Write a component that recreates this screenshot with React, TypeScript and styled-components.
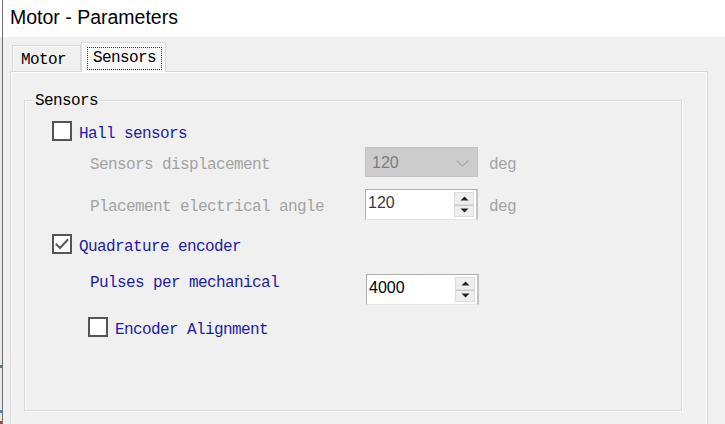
import React from "react";
import styled, { createGlobalStyle } from "styled-components";

const Global = createGlobalStyle`
  html, body { margin: 0; padding: 0; background: #f0f0f0; }
  #root { width: 725px; height: 424px; overflow: hidden; }
`;

const MONO = `"Liberation Mono", "Courier New", monospace`;
const SANS = `"Liberation Sans", Arial, sans-serif`;

const Window = styled.div`
  display: flex;
  width: 725px;
  height: 424px;
  overflow: hidden;
  background: #f0f0f0;
`;

const LeftEdge = styled.div`
  width: 2px;
  flex: none;
  border-right: 1px solid #6e6e6e;
  background:
    linear-gradient(#4a8a4a, #4a8a4a) 0 365px / 2px 3px no-repeat,
    linear-gradient(#3d8fe0, #3d8fe0) 0 410px / 2px 3px no-repeat,
    linear-gradient(#d03030, #d03030) 0 421px / 2px 3px no-repeat,
    linear-gradient(#ffffff, #ffffff) 0 0 / 2px 37px no-repeat,
    #e8e8e8;
`;

const Main = styled.div`
  flex: 1;
  display: flex;
  flex-direction: column;
  min-width: 0;
`;

const TitleBar = styled.div`
  height: 37px;
  flex: none;
  background: #ffffff;
  display: flex;
  align-items: center;
  padding: 0 0 2px 7px;
  box-sizing: border-box;
  font-family: ${SANS};
  font-size: 19.5px;
  color: #000;
`;

const Body = styled.div`
  flex: 1;
  display: flex;
  flex-direction: column;
  padding: 5px 0 0 7px;
  background: #f0f0f0;
`;

const TabStrip = styled.div`
  height: 30px;
  display: flex;
  align-items: flex-end;
  padding-left: 2px;
  position: relative;
  z-index: 1;
  margin-bottom: -1px;
`;

const Tab = styled.div<{ $active?: boolean }>`
  box-sizing: border-box;
  height: ${(p) => (p.$active ? 30 : 27)}px;
  padding: ${(p) => (p.$active ? "4px 3px 2px 5px" : "2px 8px 0")};
  display: flex;
  align-items: ${(p) => (p.$active ? "stretch" : "center")};
  border: 1px solid #d9d9d9;
  border-bottom: ${(p) => (p.$active ? "none" : "1px solid #d9d9d9")};
  background: ${(p) => (p.$active ? "#f9f9f9" : "#f0f0f0")};
  box-shadow: ${(p) => (p.$active ? "inset 1px 1px 0 #ffffff" : "inset 1px 1px 0 #fafafa")};
  font-family: ${MONO};
  font-size: 16px;
  letter-spacing: -0.6px;
  color: #000;
  width: ${(p) => (p.$active ? 85 : 69)}px;
`;

const FocusRect = styled.div`
  flex: 1;
  border: 1px dotted #333;
  display: flex;
  align-items: center;
  padding-left: 5px;
  padding-bottom: 1px;
`;

const TabPage = styled.div`
  width: 698px;
  flex: 1;
  box-sizing: border-box;
  border: 1px solid #d6d6d6;
  border-bottom: none;
  box-shadow: inset 1px 1px 0 #ffffff, inset -1px 0 0 #ffffff;
  background: #f0f0f0;
  padding: 28px 0 0 13px;
  display: flex;
  flex-direction: column;
`;

const GroupBox = styled.div`
  position: relative;
  width: 658px;
  height: 311px;
  box-sizing: border-box;
  border: 1px solid #dadada;
  box-shadow: inset 1px 1px 0 #fbfbfb, 1px 1px 0 #fbfbfb;
  display: flex;
  flex-direction: column;
  padding-left: 27px;
`;

const GroupTitle = styled.div`
  position: absolute;
  top: -8px;
  left: 8px;
  padding: 0 2px;
  background: #f0f0f0;
  font-family: ${MONO};
  font-size: 16px;
  letter-spacing: -0.6px;
  line-height: 16px;
  color: #000;
`;

const Row = styled.div<{ $top: number; $h: number; $indent?: number; $align?: string }>`
  display: flex;
  align-items: ${(p) => p.$align ?? "center"};
  margin-top: ${(p) => p.$top}px;
  height: ${(p) => p.$h}px;
  padding-left: ${(p) => p.$indent ?? 0}px;
`;

const Box = styled.div`
  width: 20px;
  height: 20px;
  box-sizing: border-box;
  border: 2px solid #555;
  background: #fff;
  display: flex;
  align-items: center;
  justify-content: center;
  flex: none;
`;

const Text = styled.span<{ $tone: "blue" | "gray" | "black"; $gap?: number; $w?: number; $pt?: number }>`
  font-family: ${MONO};
  font-size: 16px;
  letter-spacing: -0.6px;
  line-height: 16px;
  white-space: nowrap;
  padding-top: ${(p) => p.$pt ?? 5}px;
  margin-left: ${(p) => p.$gap ?? 0}px;
  ${(p) => (p.$w ? `width: ${p.$w}px; flex: none;` : "")}
  color: ${(p) =>
    p.$tone === "blue" ? "#1c1ca6" : p.$tone === "gray" ? "#a3a3a3" : "#000"};
`;

const Combo = styled.div`
  width: 113px;
  height: 30px;
  box-sizing: border-box;
  background: #cccccc;
  border: 1px solid #c2c2c2;
  display: flex;
  align-items: center;
  justify-content: space-between;
  padding: 2px 8px 0 6px;
  font-family: ${SANS};
  font-size: 16px;
  color: #7c7c7c;
  flex: none;
`;

const Spin = styled.div`
  width: 113px;
  height: 31px;
  box-sizing: border-box;
  background: #fff;
  border: 1px solid #b0b0b0;
  border-right: 2px solid #c4c4c4;
  border-bottom-color: #e6e6e6;
  display: flex;
  align-items: stretch;
  flex: none;
`;

const SpinValue = styled.div<{ $dim?: boolean }>`
  flex: 1;
  display: flex;
  align-items: center;
  padding: 0 0 3px 2px;
  font-family: ${SANS};
  font-size: 16px;
  color: ${(p) => (p.$dim ? "#3a3a3a" : "#000")};
`;

const SpinButtons = styled.div`
  width: 20px;
  display: flex;
  flex-direction: column;
  padding: 2px 2px 2px 0;
`;

const SpinBtn = styled.div`
  flex: 1;
  background: #eeeeee;
  border: 1px solid #dcdcdc;
  display: flex;
  align-items: center;
  justify-content: center;
  & + & { border-top-color: #c8c8c8; }
`;

const Unit = styled(Text)``;

const Arrow = ({ up }: { up?: boolean }) => (
  <svg width="9" height="5" viewBox="0 0 9 5">
    <path d={up ? "M0.5 4.5 L4.5 0.5 L8.5 4.5 Z" : "M0.5 0.5 L4.5 4.5 L8.5 0.5 Z"} fill="#222" />
  </svg>
);

const Chevron = () => (
  <svg width="13" height="7" viewBox="0 0 13 7">
    <path d="M0.5 0.5 L6.5 6 L12.5 0.5" fill="none" stroke="#a9a9a9" strokeWidth="1.1" />
  </svg>
);

const Check = () => (
  <svg width="16" height="16" viewBox="0 0 16 16">
    <path d="M1.8 7.8 L6 12 L14.2 3.2" fill="none" stroke="#5a5a5a" strokeWidth="2" />
  </svg>
);

const SpinBox = ({ value, dim }: { value: string; dim?: boolean }) => (
  <Spin>
    <SpinValue $dim={dim}>{value}</SpinValue>
    <SpinButtons>
      <SpinBtn>
        <Arrow up />
      </SpinBtn>
      <SpinBtn>
        <Arrow />
      </SpinBtn>
    </SpinButtons>
  </Spin>
);

export default function App() {
  return (
    <>
      <Global />
      <Window>
        <LeftEdge />
        <Main>
          <TitleBar>Motor - Parameters</TitleBar>
          <Body>
            <TabStrip>
              <Tab>Motor</Tab>
              <Tab $active>
                <FocusRect>Sensors</FocusRect>
              </Tab>
            </TabStrip>
            <TabPage>
              <GroupBox>
                <GroupTitle>Sensors</GroupTitle>
                <Row $top={20} $h={20}>
                  <Box />
                  <Text $tone="blue" $gap={7}>Hall sensors</Text>
                </Row>
                <Row $top={6} $h={30} $indent={38}>
                  <Text $tone="gray" $w={275}>Sensors displacement</Text>
                  <Combo>
                    <span>120</span>
                    <Chevron />
                  </Combo>
                  <Unit $tone="gray" $gap={11}>deg</Unit>
                </Row>
                <Row $top={12} $h={31} $indent={38}>
                  <Text $tone="gray" $w={275}>Placement electrical angle</Text>
                  <SpinBox value="120" dim />
                  <Unit $tone="gray" $gap={11}>deg</Unit>
                </Row>
                <Row $top={14} $h={20}>
                  <Box>
                    <Check />
                  </Box>
                  <Text $tone="blue" $gap={7}>Quadrature encoder</Text>
                </Row>
                <Row $top={20} $h={30} $indent={38} $align="flex-start">
                  <Text $tone="blue" $w={276} $pt={1}>
                    Pulses per mechanical
                  </Text>
                  <SpinBox value="4000" />
                </Row>
                <Row $top={13} $h={20} $indent={36}>
                  <Box />
                  <Text $tone="blue" $gap={7}>Encoder Alignment</Text>
                </Row>
              </GroupBox>
            </TabPage>
          </Body>
        </Main>
      </Window>
    </>
  );
}
